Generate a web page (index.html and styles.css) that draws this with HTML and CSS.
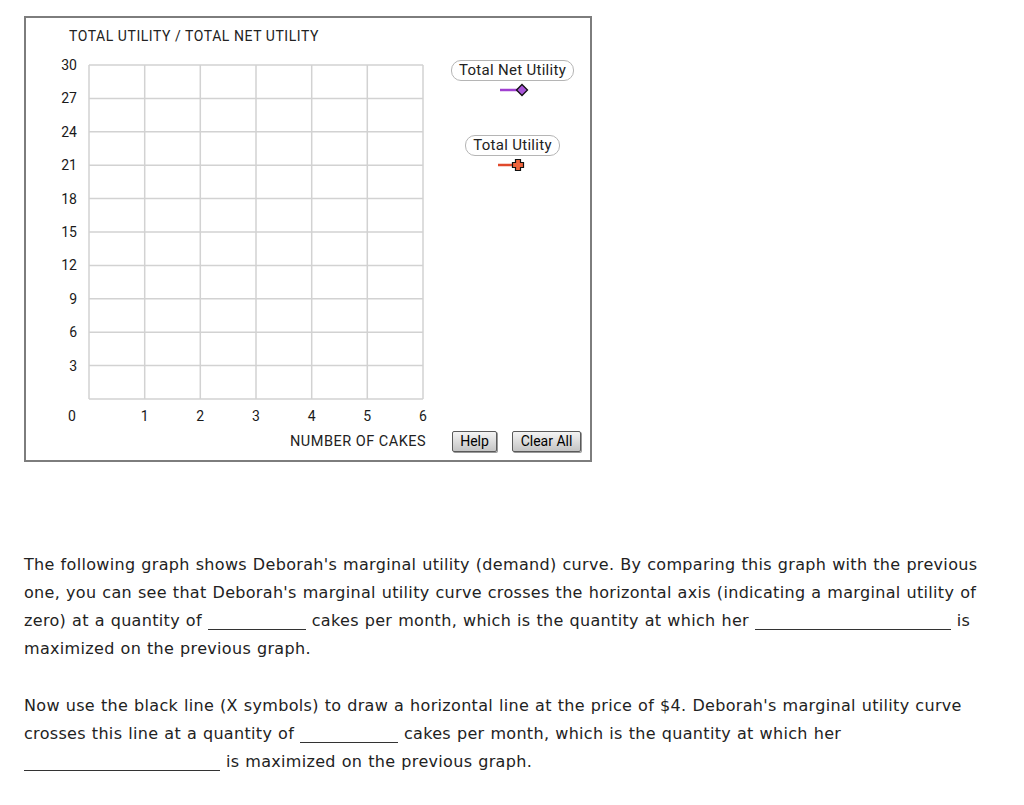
FILE: index.html
```html
<!DOCTYPE html>
<html>
<head>
<meta charset="utf-8">
<link rel="stylesheet" href="styles.css">
</head>
<body>
<div class="page">
  <div class="chart-box">
    <div class="chart-title">TOTAL UTILITY / TOTAL NET UTILITY</div>
    <div class="chart-body">
      <svg class="plot" width="414" height="376" viewBox="0 0 414 376">
        <g class="grid">
          <line x1="63" y1="13" x2="397" y2="13"/>
          <line x1="63" y1="46.4" x2="397" y2="46.4"/>
          <line x1="63" y1="79.8" x2="397" y2="79.8"/>
          <line x1="63" y1="113.2" x2="397" y2="113.2"/>
          <line x1="63" y1="146.6" x2="397" y2="146.6"/>
          <line x1="63" y1="180" x2="397" y2="180"/>
          <line x1="63" y1="213.4" x2="397" y2="213.4"/>
          <line x1="63" y1="246.8" x2="397" y2="246.8"/>
          <line x1="63" y1="280.2" x2="397" y2="280.2"/>
          <line x1="63" y1="313.6" x2="397" y2="313.6"/>
          <line x1="63" y1="347" x2="397" y2="347"/>
          <line x1="63" y1="13" x2="63" y2="347"/>
          <line x1="118.7" y1="13" x2="118.7" y2="347"/>
          <line x1="174.3" y1="13" x2="174.3" y2="347"/>
          <line x1="230" y1="13" x2="230" y2="347"/>
          <line x1="285.7" y1="13" x2="285.7" y2="347"/>
          <line x1="341.3" y1="13" x2="341.3" y2="347"/>
          <line x1="397" y1="13" x2="397" y2="347"/>
        </g>
        <g class="ylabels">
          <text x="51" y="13">30</text>
          <text x="51" y="46.4">27</text>
          <text x="51" y="79.8">24</text>
          <text x="51" y="113.2">21</text>
          <text x="51" y="146.6">18</text>
          <text x="51" y="180">15</text>
          <text x="51" y="213.4">12</text>
          <text x="51" y="246.8">9</text>
          <text x="51" y="280.2">6</text>
          <text x="51" y="313.6">3</text>
        </g>
        <g class="xlabels">
          <text x="46" y="364">0</text>
          <text x="118.7" y="364">1</text>
          <text x="174.3" y="364">2</text>
          <text x="230" y="364">3</text>
          <text x="285.7" y="364">4</text>
          <text x="341.3" y="364">5</text>
          <text x="397" y="364">6</text>
        </g>
      </svg>
      <div class="legend">
        <div class="legend-item item-net">
          <span class="pill">Total Net Utility</span>
          <svg class="marker" width="34" height="14" viewBox="0 0 34 14">
            <line x1="0" y1="7" x2="20" y2="7" stroke="#a040d0" stroke-width="2.5"/>
            <path d="M22 1.5 L27.5 7 L22 12.5 L16.5 7 Z" fill="#a855d8" stroke="#111" stroke-width="1.3"/>
          </svg>
        </div>
        <div class="legend-item item-total">
          <span class="pill">Total Utility</span>
          <svg class="marker" width="34" height="14" viewBox="0 0 34 14">
            <line x1="0" y1="7" x2="16" y2="7" stroke="#e0492c" stroke-width="2.5"/>
            <path d="M17.5 1.5 H22.5 V4.5 H25.5 V9.5 H22.5 V12.5 H17.5 V9.5 H14.5 V4.5 H17.5 Z" fill="#f0643c" stroke="#111" stroke-width="1.2"/>
          </svg>
        </div>
      </div>
    </div>
    <div class="chart-footer">
      <span class="x-title">NUMBER OF CAKES</span>
      <button class="btn btn-help">Help</button>
      <button class="btn btn-clear">Clear All</button>
    </div>
  </div>

  <p class="question q1">The following graph shows Deborah's marginal utility (demand) curve. By comparing this graph with the previous one, you can see that Deborah's marginal utility curve crosses the horizontal axis (indicating a marginal utility of zero) at a quantity of <span class="blank blank-short"></span> cakes per month, which is the quantity at which her <span class="blank blank-long"></span> is maximized on the previous graph.</p>

  <p class="question q2">Now use the black line (X symbols) to draw a horizontal line at the price of $4. Deborah's marginal utility curve crosses this line at a quantity of <span class="blank blank-short"></span> cakes per month, which is the quantity at which her <span class="blank blank-long"></span> is maximized on the previous graph.</p>
</div>
</body>
</html>
```

FILE: styles.css
```css
html, body {
  margin: 0;
  padding: 0;
  background: #fff;
}

.page {
  padding: 16px 0 0 24px;
  width: 976px;
}

.chart-box {
  width: 564px;
  height: 442px;
  border: 2px solid #7d7d7d;
  font-family: Roboto, "Liberation Sans", sans-serif;
  color: #222;
  display: flex;
  flex-direction: column;
}

.chart-title {
  font-size: 14px;
  line-height: 16px;
  padding: 10px 0 0 43px;
  height: 24px;
  letter-spacing: 0.55px;
}

.chart-body {
  display: flex;
  height: 376px;
}

.plot {
  display: block;
  flex: none;
}

.grid line {
  stroke: #d2d2d2;
  stroke-width: 1.5;
}

.plot text {
  font-family: Roboto, "Liberation Sans", sans-serif;
  font-size: 14px;
  fill: #1a1a1a;
  dominant-baseline: central;
}

.ylabels text {
  text-anchor: end;
}

.xlabels text {
  text-anchor: middle;
}

.legend {
  flex: 1;
  display: flex;
  flex-direction: column;
  align-items: center;
  padding-top: 8px;
  padding-right: 5px;
}

.legend-item {
  display: flex;
  flex-direction: column;
  align-items: center;
}

.item-total {
  margin-top: 38px;
}

.pill {
  display: inline-block;
  border: 1px solid #b5b5b5;
  border-radius: 10px;
  padding: 0 7px;
  height: 19px;
  line-height: 19px;
  font-size: 15px;
  letter-spacing: 0.3px;
  color: #222;
  background: #fff;
}

.marker {
  display: block;
  margin-top: 2px;
}

.item-net .marker {
  margin-left: 9px;
}

.item-total .marker {
  margin-left: 5px;
}

.chart-footer {
  display: flex;
  align-items: center;
  height: 26px;
}

.x-title {
  font-size: 14.5px;
  letter-spacing: 0.5px;
  margin-left: 264px;
  width: 136px;
  text-align: right;
  white-space: nowrap;
  padding-top: 1px;
}

.btn {
  font-family: Roboto, "Liberation Sans", sans-serif;
  font-size: 14px;
  font-weight: 400;
  color: #000;
  height: 21px;
  padding: 0 4px;
  border: 1px solid #5a5a5a;
  border-radius: 2px;
  background: linear-gradient(#f4f4f4, #c4c4c4);
  box-shadow: 1px 1px 0 #9a9a9a;
  line-height: 19px;
  white-space: nowrap;
}

.btn-help {
  margin-left: 26px;
  width: 45px;
}

.btn-clear {
  margin-left: 15px;
  width: 69px;
}

.question {
  font-family: "DejaVu Sans", Verdana, sans-serif;
  font-size: 16px;
  letter-spacing: 0.32px;
  word-spacing: 0.5px;
  line-height: 28px;
  color: #222;
  margin: 0;
}

.q1 {
  margin-top: 89px;
}

.q2 {
  margin-top: 29px;
}

.blank {
  display: inline-block;
  border-bottom: 1px solid #333;
  height: 0;
  vertical-align: -4px;
}

.blank-short {
  width: 98px;
}

.blank-long {
  width: 196px;
}
```
